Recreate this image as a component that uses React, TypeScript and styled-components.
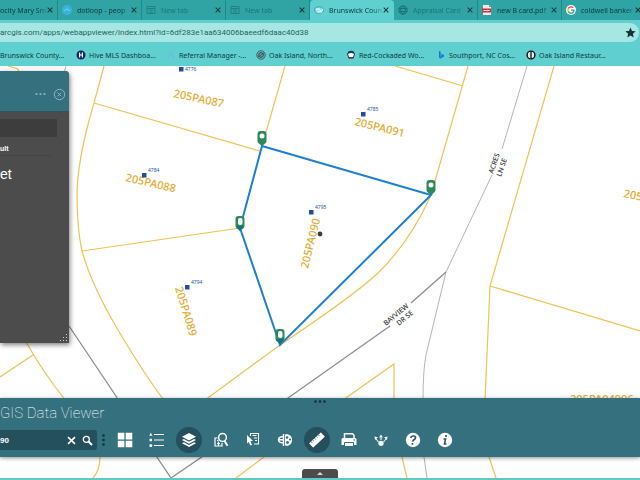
import React from "react";
import styled, { createGlobalStyle, css } from "styled-components";

const GlobalStyle = createGlobalStyle`
  * { box-sizing: border-box; }
  body { margin: 0; overflow: hidden; }
  button, input { font: inherit; color: inherit; border: 0; background: none; padding: 0; margin: 0; }
  button { cursor: pointer; display: flex; align-items: center; justify-content: center; }
  svg { display: block; flex: none; }
`;

const Page = styled.div`
  height: 100vh;
  display: flex;
  flex-direction: column;
  overflow: hidden;
  background: #fff;
  border-bottom: 2px solid #62c9c5;
  font-family: "Noto Sans", "Open Sans", sans-serif;
`;

const TabStrip = styled.div`
  display: flex;
  height: 20px;
  flex: none;
  overflow: hidden;
  background: #30a3a5;
`;

const Tab = styled.div<{ $active?: boolean; $dim?: boolean; $first?: boolean }>`
  flex: 0 0 ${(p) => (p.$first ? 58 : 84)}px;
  min-width: 0;
  display: flex;
  align-items: center;
  height: 20px;
  padding: 0 4px 0 ${(p) => (p.$first ? 0 : 4)}px;
  font-size: 7px;
  color: ${(p) => (p.$dim ? "#1b7679" : "#0b393b")};
  border-right: 1px solid #24878a;
  ${(p) =>
    p.$active &&
    css`
      background: #5fd0cf;
      border-radius: 4px 4px 0 0;
      border-right-color: transparent;
    `}
`;

const TabTitle = styled.span`
  flex: 1;
  min-width: 0;
  white-space: nowrap;
  mask-image: linear-gradient(to right, #000 80%, rgba(0, 0, 0, 0.3));

  svg + & {
    margin-left: 5px;
  }
`;

const TabClose = styled.button`
  width: 7px;
  height: 12px;
  color: #0b393b;
`;

const AddressRow = styled.div`
  flex: none;
  height: 24px;
  padding: 3px 0 0;
  background: #5fd0cf;
`;

const AddressBar = styled.div`
  display: flex;
  align-items: center;
  height: 19px;
  margin-right: 1px;
  padding-right: 3px;
  border-radius: 0 9px 9px 0;
  background: #a7e7e3;
`;

const Url = styled.input`
  flex: 1;
  min-width: 0;
  height: 18px;
  outline: 0;
  font-family: Roboto, sans-serif;
  font-size: 8px;
  color: #28605f;
`;

const Bookmarks = styled.nav`
  display: flex;
  align-items: center;
  flex: none;
  height: 22px;
  overflow: hidden;
  background: #5fd0cf;
`;

const Bookmark = styled.a<{ $first?: boolean }>`
  flex: 0 0 ${(p) => (p.$first ? 76 : 90)}px;
  display: flex;
  align-items: center;
  gap: 3px;
  font-size: 7px;
  white-space: nowrap;
  text-decoration: none;
  color: #0c3b3d;
`;

const MapArea = styled.main`
  position: relative;
  flex: 1;
  min-height: 0;
  overflow: hidden;
`;

const MapDrawing = styled.svg`
  width: 100%;
  height: 100%;
`;

const ResultPanel = styled.section`
  position: absolute;
  left: 0;
  top: 5px;
  width: 69px;
  height: 272px;
  overflow: hidden;
  display: flex;
  flex-direction: column;
  border-radius: 0 4px 0 0;
  background: #4c4c4c;
  box-shadow: 1px 2px 5px rgba(0, 0, 0, 0.5);
  color: #fff;
  font-family: "Liberation Sans", Arial, sans-serif;
`;

const PanelHeader = styled.header`
  display: flex;
  align-items: center;
  justify-content: flex-end;
  gap: 7px;
  height: 41px;
  padding: 6px 3px 0 0;
  background: #34707e;
  color: #8fb5bf;
  border-bottom: 1px solid #2c5560;
`;

const PanelField = styled.div`
  height: 18px;
  margin: 7px 12px 0 0;
  background: #3d3d3d;
`;

const PanelTab = styled.div`
  margin-right: 17px;
  height: 19px;
  padding-top: 7px;
  border-bottom: 1px solid #454545;
  font-size: 7px;
  line-height: 9px;
  font-weight: bold;
`;

const PanelHeading = styled.div`
  padding-top: 9px;
  font-size: 14px;
  line-height: 18px;
`;

const ResizeGrip = styled.div`
  display: flex;
  justify-content: flex-end;
  margin-top: auto;
  padding: 0 1px 1px 0;
`;

const Dock = styled.section`
  position: absolute;
  left: 0;
  right: 0;
  bottom: 21px;
  height: 59px;
  display: flex;
  flex-direction: column;
  background: #34707e;
  box-shadow: 0 1px 4px rgba(0, 0, 0, 0.45);
`;

const DockHandle = styled.button`
  align-self: center;
  height: 7px;
  width: 14px;
`;

const DockTitle = styled.h1`
  margin: 0;
  height: 22px;
  font-family: Roboto, sans-serif;
  font-weight: 100;
  font-size: 15px;
  line-height: 17px;
  color: #fff;
`;

const Toolbar = styled.div`
  display: flex;
  align-items: center;
  height: 26px;
  color: #fff;
`;

const SearchBox = styled.div`
  display: flex;
  align-items: center;
  gap: 6px;
  width: 97px;
  height: 20px;
  padding-right: 4px;
  border-radius: 0 2px 2px 0;
  background: #24505d;
`;

const SearchInput = styled.input`
  flex: 1;
  min-width: 0;
  outline: 0;
  font-family: "Liberation Sans", Arial, sans-serif;
  font-size: 8px;
  font-weight: bold;
`;

const DotsButton = styled.button`
  width: 12px;
  height: 20px;
`;

const Tools = styled.div`
  display: flex;
  gap: 6px;
  margin-left: 3px;
`;

const Tool = styled.button<{ $on?: boolean }>`
  width: 26px;
  height: 26px;
  border-radius: 50%;
  background: ${(p) => (p.$on ? "#24505d" : "none")};
`;

const Drawer = styled.button`
  position: absolute;
  left: 50%;
  bottom: 0;
  width: 36px;
  height: 9px;
  margin-left: -18px;
  border-radius: 3px 3px 0 0;
  background: #4c4c4c;
`;

const Cross = ({ size = 6 }: { size?: number }) => (
  <svg width={size} height={size} viewBox="0 0 6 6">
    <path d="M.7.7l4.6 4.6M5.3.7L.7 5.3" stroke="currentColor" strokeWidth="1.1" />
  </svg>
);

const Fav = ({ kind }: { kind: string }) => (
  <svg width="10" height="10" viewBox="0 0 10 10" fill="none">
    {kind === "loop" && (
      <>
        <circle cx="5" cy="5" r="5" fill="#37b4dc" />
        <path d="M2.5 6a2.6 2.6 0 0 1 5 0" stroke="#75d8ed" />
      </>
    )}
    {kind === "new" && <path d="M1 1.5h8v7H1zM1 3.5h8M3 5h4M3 7h4" stroke="#1f7e81" strokeWidth=".9" />}
    {kind === "county" && (
      <>
        <ellipse cx="5" cy="5" rx="4.4" ry="3.2" fill="#8edce8" stroke="#369dbb" />
        <path d="M2 5q2-3 4 0t3-1M3 7h5" stroke="#fff" />
      </>
    )}
    {kind === "globe" && <path d="M5 .8a4.2 4.2 0 1 0 .1 0M1 3.5h8M1 6.5h8M5 1c-3 2-3 6 0 8c3-2 3-6 0-8" stroke="#176d70" strokeWidth=".9" />}
    {kind === "pdf" && (
      <>
        <path d="M1 0h6l2 2v8H1z" fill="#f2e8e8" />
        <path d="M7 0l2 2H7z" fill="#a76" />
        <path d="M0 3.5h9v4H0z" fill="#d8303a" />
        <path d="M1.5 5.5h6" stroke="#fff" />
      </>
    )}
    {kind === "google" && (
      <>
        <circle cx="5" cy="5" r="5" fill="#fff" />
        <path d="M7.3 2.8A3.1 3.1 0 0 0 2.3 3.6" stroke="#ea4335" strokeWidth="1.4" />
        <path d="M2.3 3.6a3 3 0 0 0 0 2.8" stroke="#fbbc05" strokeWidth="1.4" />
        <path d="M2.3 6.4A3 3 0 0 0 7 7.4" stroke="#34a853" strokeWidth="1.4" />
        <path d="M7 7.4A3 3 0 0 0 8 5.1H5" stroke="#4285f4" strokeWidth="1.4" />
      </>
    )}
    {kind === "hive" && (
      <>
        <circle cx="5" cy="5" r="4.5" fill="#122a63" />
        <path d="M3.6 2.5v5M6.4 2.5v5M3.6 5h2.8" stroke="#fff" strokeWidth="1.1" />
      </>
    )}
    {kind === "referral" && <path d="M2 8l3-6 3 6" stroke="#70b9e5" strokeWidth="1.4" />}
    {kind === "island" && (
      <>
        <circle cx="5" cy="5" r="4.3" fill="#6da9a9" stroke="#315d62" strokeWidth=".8" />
        <circle cx="5" cy="5" r="2.3" stroke="#284e54" />
        <path d="M2 7l6-4" stroke="#284e54" strokeWidth=".7" />
      </>
    )}
    {kind === "wood" && (
      <>
        <path d="M1 4l1.5-2.7L5 .8l2.5.5L9 4 7.5 8.5h-5z" fill="#16386b" />
        <path d="M2 4q3-2 6 0L7 7H3z" fill="#fff" />
        <path d="M3 8.2h4" stroke="#c33" />
      </>
    )}
    {kind === "bing" && <path d="M3 1l1.6.6v4.8L3 7.7zM5 3.7l3 1.3v1.6L4.6 8.4 3 7.7l2.6-1.6z" fill="#1475d4" />}
    {kind === "oak" && (
      <>
        <circle cx="5" cy="5" r="3.9" fill="#dff5f4" stroke="#090b0b" strokeWidth="1.4" />
        <path d="M5 2v6" stroke="#090b0b" strokeWidth="1.3" />
      </>
    )}
  </svg>
);

const tabs = [
  { icon: "", title: "ocity Mary Sm" },
  { icon: "loop", title: "dotloop - peop" },
  { icon: "new", title: "New tab", dim: true },
  { icon: "new", title: "New tab", dim: true },
  { icon: "county", title: "Brunswick Coun", active: true },
  { icon: "globe", title: "Appraisal Card", dim: true },
  { icon: "pdf", title: "new B card.pdf" },
  { icon: "google", title: "coldwell banker" },
];

const bookmarks = [
  { icon: "", title: "Brunswick County..." },
  { icon: "hive", title: "Hive MLS Dashboa..." },
  { icon: "referral", title: "Referral Manager -..." },
  { icon: "island", title: "Oak Island, North..." },
  { icon: "wood", title: "Red-Cockaded Wo..." },
  { icon: "bing", title: "Southport, NC Cos..." },
  { icon: "oak", title: "Oak Island Restaur..." },
];

const parcels: [string, number, number, number][] = [
  ["205PA087", 173, 97, 12],
  ["205PA091", 354, 125, 14],
  ["205PA088", 125, 181, 13],
  ["205PA089", 175, 288, 73],
  ["205PA090", 308, 269, -76],
  ["205", 623, 197, 12],
  ["205PA04906", 570, 403, 0],
];

const addresses: [string, number, number][] = [
  ["4776", 181, 69],
  ["4785", 363, 114],
  ["4784", 144, 175],
  ["4795", 311, 212],
  ["4794", 187, 287],
];

const roads: [string, number, number, number][] = [
  ["ACRES", 493, 174, -71],
  ["LN SE", 501, 177, -71],
  ["BAYVIEW", 386, 326, -40],
  ["DR SE", 399, 326, -40],
];

const Pin = ({ x, y, traced }: { x: number; y: number; traced?: boolean }) => (
  <g transform={`translate(${x} ${y})`}>
    <path d="M-4.5-12q0-3 3-3h3q3 0 3 3v7q0 2-2 3L0 0l-2.500-2q-2-1-2-3z" fill="#2c8a58" />
    {traced ? (
      <>
        <rect x="-2" y="-13" width="4.500" height="7" rx="2" fill="#fff" />
        <path d="M-3.500-5h7L0 0z" fill="#126e91" />
      </>
    ) : (
      <circle cy="-10" r="2.500" fill="#fff" />
    )}
  </g>
);

const ParcelMap = () => (
  <MapDrawing viewBox="0 66 640 412" preserveAspectRatio="xMinYMin slice" role="img" aria-label="Parcel map">
    <g fill="none" stroke="#efc252" strokeWidth="1.200">
      <path d="M104 66L94 103Q77 160 77 196Q77 228 82 251Q91 284 118 330Q148 380 164 400" />
      <path d="M94 103L260 151M285 66L262 146M82 251L240 228M395 66L463 86M468 66L431 195" />
      <path d="M431 195Q411 240 380 271Q359 292 280 345L205 400" />
      <path d="M554 66L490 286L485 400M490 286L640 331M489 457L496 478" />
      <path d="M343 400L394 364V400M402 457L407 478M264 457L236 478" />
      <path d="M25 340Q42 371 66 401M0 377L33 355M100 457Q100 470 93 478M8 66L18 69L19 73" />
    </g>
    <g fill="none" stroke="#b4b4b4">
      <path d="M527 66L502 149M492 175L446 272L426 355Q423 370 423 400M424 457L427 478M66 66L64 73" />
    </g>
    <g fill="none" stroke="#8e8e8e" strokeWidth="1.300">
      <path d="M446 272L411 303M390 326L288 398L171 478L69 326" />
    </g>
    <path d="M262 146L431 195L280 345L240 228Z" fill="none" stroke="#1d7fd2" strokeWidth="2" />
    <g fill="#e6a92b" fontFamily="Noto Sans, sans-serif" fontSize="11" fontWeight="500">
      {parcels.map(([t, x, y, r]) => (
        <text key={`${t}${x}`} transform={`translate(${x} ${y}) rotate(${r})`}>{t}</text>
      ))}
    </g>
    <g fill="#1f4fa3" fontFamily="Noto Sans, sans-serif" fontSize="5">
      {addresses.map(([t, x, y]) => (
        <g key={t} transform={`translate(${x} ${y})`}>
          <rect x="-2" y="-2" width="4.500" height="4.500" />
          <text x="4" y={t === "4776" ? 2 : -3}>{t}</text>
        </g>
      ))}
    </g>
    <g fill="#333" fontFamily="Noto Sans, sans-serif" fontSize="7" fontWeight="500">
      {roads.map(([t, x, y, r]) => (
        <text key={t} transform={`translate(${x} ${y}) rotate(${r})`}>{t}</text>
      ))}
    </g>
    <circle cx="320" cy="234" r="2.400" fill="#3c3c3c" />
    <Pin x={262} y={146} />
    <Pin x={431} y={195} />
    <Pin x={240} y={231} traced />
    <Pin x={280} y={344} traced />
  </MapDrawing>
);

const Icon = ({ name }: { name: string }) => (
  <svg width="16" height="16" viewBox="0 0 16 16" fill="none" stroke="#fff">
    {name === "Basemap Gallery" && <path d="M.8.800h6.600v6.600H.8zM8.700.800h6.600v6.600H8.700zM.8 8.700h6.600v6.600H.8zM8.700 8.700h6.600v6.600H8.700z" fill="#fff" stroke="none" />}
    {name === "Legend" && (
      <>
        <path d="M5 2.500h10M5 8h10M5 13.500h10" strokeWidth="1.200" />
        <path d="M1.800.800l1.700 3H.2zM.5 6.700H3v2.600H.5z" fill="#fff" stroke="none" />
        <circle cx="1.800" cy="13.500" r="1.500" fill="#fff" stroke="none" />
      </>
    )}
    {name === "Layers" && <path d="M8 1l7 3.700-7 3.700-7-3.700zM1 8l1.900-1L8 9.700 13.100 7l1.900 1-7 3.700zM1 11.300l1.900-1L8 13l5.100-2.700 1.900 1L8 15z" fill="#fff" stroke="none" />}
    {name === "Query" && (
      <>
        <circle cx="9.500" cy="5.500" r="3.900" strokeWidth="1.500" />
        <path d="M11.500 9l3 4.800" strokeWidth="1.900" />
        <path d="M4.500 6H2v8h7v-3M4 8.500h1.500M4 11.500h3M5.500 9.500v4" strokeWidth="1.200" />
      </>
    )}
    {name === "Select" && (
      <>
        <path d="M2 3l6 6H5.500l1.500 4-1.700.6L3.800 10 2 11.500z" fill="#fff" stroke="none" />
        <path d="M5.500 4V1.500h8V12H9M7.500 3.500h4M9 6h3M10 8.500h2" strokeWidth="1.100" />
      </>
    )}
    {name === "Draw" && (
      <>
        <path d="M8 2.500c4-1 7 1.300 7 5.500s-3 6.500-7 5.500z" fill="#fff" stroke="none" />
        <path d="M6.500 2v12M6 4.500C0 5 0 10.500 6 11M1 7.800h5" strokeWidth="1.500" />
        <g fill="#34707e" stroke="none"><circle cx="10" cy="5.500" r="1.300" /><circle cx="13" cy="7.500" r="1.100" /><circle cx="10.500" cy="10.500" r="1.400" /></g>
      </>
    )}
    {name === "Measurement" && (
      <g transform="rotate(-43 8 8)">
        <rect x="0" y="5" width="16" height="6" rx=".5" fill="#fff" stroke="none" />
        <path d="M2.500 5v2M5 5v1.500M7.500 5v2M10 5v1.500M12.500 5v2" stroke="#24505d" strokeWidth=".7" />
      </g>
    )}
    {name === "Print" && (
      <>
        <path d="M3.500 6V1.800h8L13 3.300V6" strokeWidth="1.500" />
        <path d="M2 6h12q1.500 0 1.500 1.500V13H.5V7.500Q.5 6 2 6z" fill="#fff" stroke="none" />
        <path d="M3.500 10.500h9v4h-9z" fill="#fff" stroke="#34707e" />
        <path d="M12.500 8h1.500" stroke="#34707e" />
      </>
    )}
    {name === "Share" && (
      <>
        <circle cx="8" cy="11.300" r="2.600" fill="#fff" stroke="none" />
        <path d="M8 8V5M5.500 10L3 7M10.500 10L13 7" strokeWidth="1.100" strokeDasharray="2 .5" />
        <path d="M8 2.500l2 3H6zM1.500 4.500l3.500.8L2 8zM14.500 4.500L11 5.300 14 8z" fill="#fff" stroke="none" />
      </>
    )}
    {name === "Help" && (
      <>
        <circle cx="8" cy="8" r="7.200" fill="#fff" stroke="none" />
        <path d="M5.800 6Q6 4 8.300 4t2.200 1.900C10.400 7.500 8 7.500 7.700 9.500M7.400 11v1.800" stroke="#285764" strokeWidth="1.600" />
      </>
    )}
    {name === "About" && (
      <>
        <circle cx="8" cy="8" r="7.200" fill="#fff" stroke="none" />
        <path d="M9 3v2M6.500 7h2l-1 5h2" stroke="#285764" strokeWidth="1.600" />
      </>
    )}
  </svg>
);

const tools = ["Basemap Gallery", "Legend", "Layers", "Query", "Select", "Draw", "Measurement", "Print", "Share", "Help", "About"];

export default function App() {
  return (
    <Page>
      <GlobalStyle />
      <TabStrip>
        {tabs.map((t, i) => (
          <Tab key={i} $active={t.active} $dim={t.dim} $first={i === 0}>
            {t.icon && <Fav kind={t.icon} />}
            <TabTitle>{t.title}</TabTitle>
            <TabClose aria-label="Close tab"><Cross /></TabClose>
          </Tab>
        ))}
      </TabStrip>
      <AddressRow>
        <AddressBar>
          <Url aria-label="Address" defaultValue="arcgis.com/apps/webappviewer/index.html?id=6df283e1aa634006baeedf6daac40d38" />
          <button aria-label="Bookmark this page">
            <svg width="11" height="11" viewBox="0 0 11 11">
              <path d="M5.500.500l1.500 3.400 3.700.4-2.800 2.500.8 3.700-3.200-1.900-3.200 1.900.8-3.700L.3 4.300 4 3.900z" fill="#123435" />
            </svg>
          </button>
        </AddressBar>
      </AddressRow>
      <Bookmarks>
        {bookmarks.map((b, i) => (
          <Bookmark key={b.title} href="#" $first={i === 0}>
            {b.icon && <Fav kind={b.icon} />}
            {b.title}
          </Bookmark>
        ))}
      </Bookmarks>
      <MapArea>
        <ParcelMap />
        <ResultPanel>
          <PanelHeader>
            <button aria-label="More">
              <svg width="11" height="4" viewBox="0 0 11 4" fill="currentColor">
                <circle cx="1.500" cy="2" r="1.100" /><circle cx="5.500" cy="2" r="1.100" /><circle cx="9.500" cy="2" r="1.100" />
              </svg>
            </button>
            <button aria-label="Close">
              <svg width="13" height="13" viewBox="0 0 13 13" fill="none" stroke="currentColor">
                <circle cx="6.500" cy="6.500" r="5.200" />
                <path d="M4.700 4.700l3.600 3.600M8.300 4.700L4.700 8.300" />
              </svg>
            </button>
          </PanelHeader>
          <PanelField />
          <PanelTab>ult</PanelTab>
          <PanelHeading>et</PanelHeading>
          <ResizeGrip>
            <svg width="8" height="8" viewBox="0 0 8 8" fill="#d0d0d0">
              <path d="M6 0h1v1H6zM3 3h1v1H3zM6 3h1v1H6zM0 6h1v1H0zM3 6h1v1H3zM6 6h1v1H6z" />
            </svg>
          </ResizeGrip>
        </ResultPanel>
        <Dock>
          <DockHandle aria-label="Collapse">
            <svg width="12" height="3" viewBox="0 0 12 3" fill="#12303a">
              <circle cx="1.500" cy="1.500" r="1.300" /><circle cx="6" cy="1.500" r="1.300" /><circle cx="10.500" cy="1.500" r="1.300" />
            </svg>
          </DockHandle>
          <DockTitle>GIS Data Viewer</DockTitle>
          <Toolbar>
            <SearchBox>
              <SearchInput aria-label="Search" defaultValue="90" />
              <button aria-label="Clear"><Cross size={9} /></button>
              <button aria-label="Search parcels">
                <svg width="11" height="11" viewBox="0 0 11 11" fill="none" stroke="#fff">
                  <circle cx="4.300" cy="4.300" r="3" strokeWidth="1.300" />
                  <path d="M6.500 6.500l3.500 3.500" strokeWidth="1.900" />
                </svg>
              </button>
            </SearchBox>
            <DotsButton aria-label="More search options">
              <svg width="3" height="12" viewBox="0 0 3 12" fill="#12303a">
                <circle cx="1.500" cy="1.500" r="1.300" /><circle cx="1.500" cy="6" r="1.300" /><circle cx="1.500" cy="10.500" r="1.300" />
              </svg>
            </DotsButton>
            <Tools>
              {tools.map((t) => (
                <Tool key={t} aria-label={t} $on={t === "Layers" || t === "Measurement"}>
                  <Icon name={t} />
                </Tool>
              ))}
            </Tools>
          </Toolbar>
        </Dock>
        <Drawer aria-label="Open attribute table">
          <svg width="6" height="3" viewBox="0 0 6 3"><path d="M3 0l3 3H0z" fill="#d8d8d8" /></svg>
        </Drawer>
      </MapArea>
    </Page>
  );
}
